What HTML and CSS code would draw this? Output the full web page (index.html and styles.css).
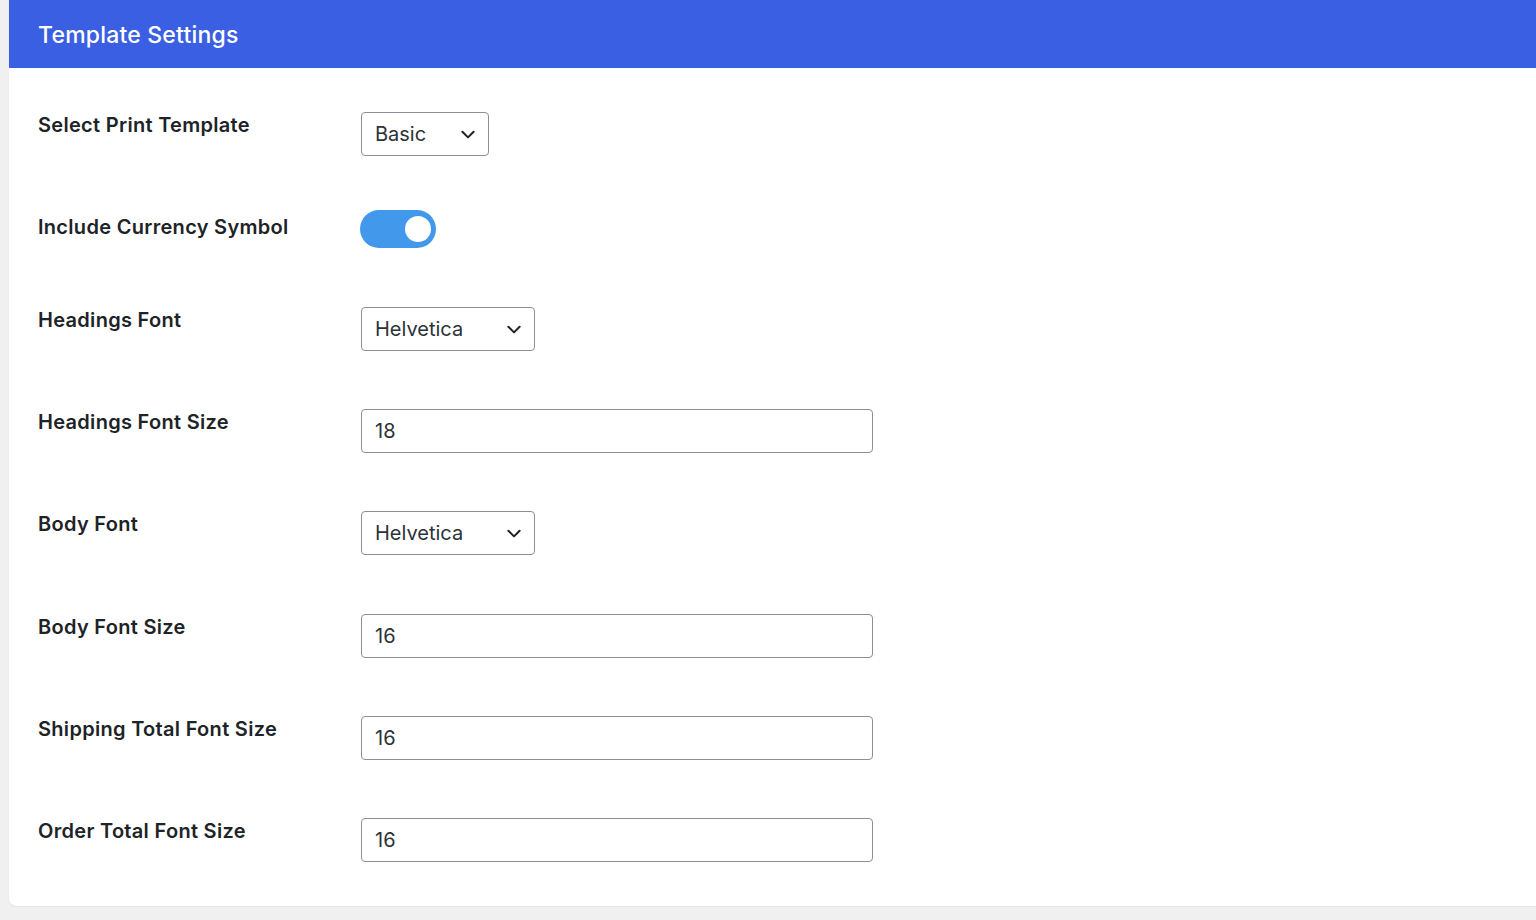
FILE: index.html
```html
<!DOCTYPE html>
<html lang="en">
<head>
  <meta charset="utf-8">
  <title>Template Settings</title>
  <link rel="stylesheet" href="styles.css">
</head>
<body>
  <div class="card">
    <div class="card-header">
      <h2 class="card-title">Template Settings</h2>
    </div>
    <div class="card-body">
      <div class="row">
        <label class="row-label">Select Print Template</label>
        <div class="select select-sm">
          <span>Basic</span>
          <svg class="chevron" viewBox="0 0 16 16"><path d="M3 6l5 5 5-5" fill="none" stroke="#1d2327" stroke-width="1.8" stroke-linecap="round" stroke-linejoin="round"/></svg>
        </div>
      </div>

      <div class="row row-toggle">
        <label class="row-label">Include Currency Symbol</label>
        <div class="toggle on"><span class="knob"></span></div>
      </div>

      <div class="row">
        <label class="row-label">Headings Font</label>
        <div class="select">
          <span>Helvetica</span>
          <svg class="chevron" viewBox="0 0 16 16"><path d="M3 6l5 5 5-5" fill="none" stroke="#1d2327" stroke-width="1.8" stroke-linecap="round" stroke-linejoin="round"/></svg>
        </div>
      </div>

      <div class="row">
        <label class="row-label">Headings Font Size</label>
        <div class="input">18</div>
      </div>

      <div class="row">
        <label class="row-label">Body Font</label>
        <div class="select">
          <span>Helvetica</span>
          <svg class="chevron" viewBox="0 0 16 16"><path d="M3 6l5 5 5-5" fill="none" stroke="#1d2327" stroke-width="1.8" stroke-linecap="round" stroke-linejoin="round"/></svg>
        </div>
      </div>

      <div class="row">
        <label class="row-label">Body Font Size</label>
        <div class="input">16</div>
      </div>

      <div class="row">
        <label class="row-label">Shipping Total Font Size</label>
        <div class="input">16</div>
      </div>

      <div class="row">
        <label class="row-label">Order Total Font Size</label>
        <div class="input">16</div>
      </div>
    </div>
  </div>
</body>
</html>
```

FILE: styles.css
```css
* {
  margin: 0;
  padding: 0;
  box-sizing: border-box;
}

body {
  font-family: 'Inter', 'Noto Sans', sans-serif;
  background-color: #f0f0f1;
  color: #1d2327;
  overflow: hidden;
}

.card {
  margin-left: 9px;
  margin-right: -20px;
  background: #ffffff;
  border-radius: 0 0 8px 8px;
  box-shadow: 0 1px 2px rgba(0, 0, 0, 0.06);
  border-bottom: 1px solid #e6e6e8;
}

.card-header {
  background: #3b5fe2;
  height: 68px;
  display: flex;
  align-items: center;
  padding-left: 29px;
  padding-top: 1px;
}

.card-title {
  font-size: 23px;
  font-weight: 500;
  color: #ffffff;
  letter-spacing: 0.2px;
}

.card-body {
  padding: 44px 0 44px 29px;
  display: flex;
  flex-direction: column;
  gap: 58.2px;
}

.row {
  display: flex;
  align-items: flex-start;
}

.row-label {
  width: 323px;
  font-size: 20px;
  font-weight: 600;
  line-height: 27px;
  letter-spacing: 0.3px;
  color: #1d2327;
}

.select,
.input {
  height: 44px;
  border: 1px solid #8c8f94;
  border-radius: 4px;
  background: #ffffff;
  font-size: 20px;
  color: #2c3338;
  display: flex;
  align-items: center;
  padding: 0 13px;
}

.select {
  width: 174px;
  justify-content: space-between;
}

.select-sm {
  width: 128px;
}

.chevron {
  width: 18px;
  height: 18px;
  margin-right: -2px;
}

.input {
  width: 512px;
}

.row-toggle .toggle {
  margin-top: -4px;
  margin-bottom: 0.6px;
  margin-left: -1px;
}

.toggle {
  width: 76px;
  height: 38px;
  border-radius: 19px;
  background: #c3c4c7;
  position: relative;
}

.toggle.on {
  background: #4299eb;
}

.knob {
  position: absolute;
  top: 6px;
  left: 6px;
  width: 26px;
  height: 26px;
  border-radius: 50%;
  background: #ffffff;
}

.toggle.on .knob {
  left: auto;
  right: 5px;
}
```
